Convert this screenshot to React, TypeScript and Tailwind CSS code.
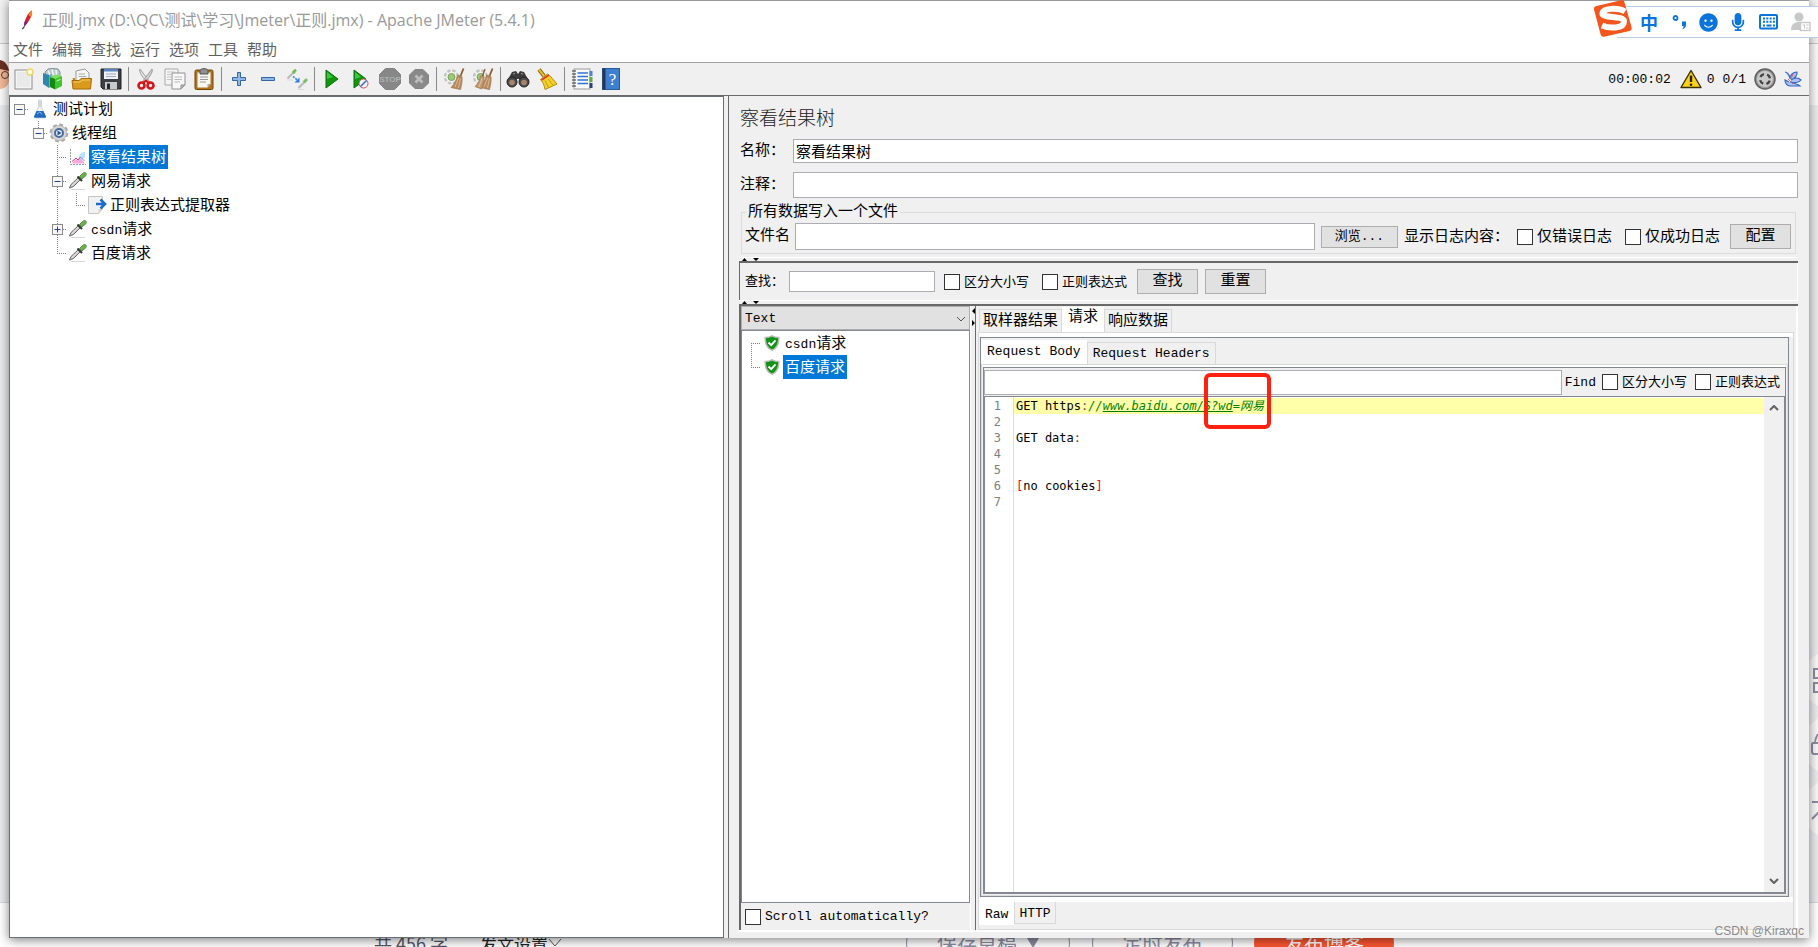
import React, { useState } from 'react';
import { FaSmile, FaMicrophone } from 'react-icons/fa';

type Cell = 'blank' | 'pass' | 'tee' | 'elbow' | 'start' | 'minus' | 'plus' | 'minusRoot' | 'minusLast';

interface Node {
  id: string;
  cells: Cell[];
  icon: React.ReactNode;
  latin?: string;
  label: string;
}

/* ---------- icons ---------- */

const Feather = () => (
  <svg width="12" height="20" viewBox="0 0 12 20">
    <path d="M10.5 0.5C12 3 10 8 7 12L3.5 16.5C2.5 14 4 10 5.5 7C7 4 9 1.5 10.5 0.5Z" fill="#d3222a" />
    <path d="M10.5 0.5C12 3 11 5 10 7L7.5 5C8.5 3 9.5 1.5 10.5 0.5Z" fill="#f08a24" />
    <path d="M4 11L7 12L3.5 16.5C2.8 15 3 13 4 11Z" fill="#7b2482" />
    <path d="M3.5 16.5L1.2 19.2" stroke="#444" strokeWidth="1.2" />
  </svg>
);

const NewIcon = () => (
  <svg width="20" height="22" viewBox="0 0 20 22">
    <rect x="1" y="2" width="17" height="19" fill="#f4f4f4" stroke="#8f8f8f" />
    <rect x="3" y="4" width="13" height="15" fill="#e9e9e9" />
    <circle cx="16" cy="4" r="3" fill="#fffbe0" stroke="#ecd968" strokeWidth="1.5" />
  </svg>
);

const TemplatesIcon = () => (
  <svg width="22" height="22" viewBox="0 0 22 22">
    <path d="M3 4L6 1L11 .5L16 1L18 4V9H4Z" fill="#b9c9cd" stroke="#7f9296" />
    <path d="M6 2.500L8 7M10 1.500L11.500 7M14 2L14.500 7" stroke="#f3f7f8" strokeWidth="1.400" />
    <path d="M1 5L7 7V20L1 16Z" fill="#2f86ad" />
    <path d="M7 7L10 6V18L7 20Z" fill="#56b3d4" />
    <path d="M8 9L13 10.500V21.500L8 19Z" fill="#128a10" />
    <path d="M13 10.500L20 8V18L13 21.500Z" fill="#3fc62a" />
    <path d="M8 9L15 6.500L20 8L13 10.500Z" fill="#7be05c" />
    <path d="M14.500 13L18.500 11.500" stroke="#d8ffcb" />
  </svg>
);

const OpenIcon = () => (
  <svg width="22" height="22" viewBox="0 0 22 22">
    <path d="M5 3L14 1L18 5V13H5Z" fill="#f7f7f7" stroke="#999" />
    <path d="M7.500 6H14M7.500 8.500H15.500" stroke="#aaa" />
    <path d="M1.500 10H4V12H2Z M18 10H20.500V12H18Z" fill="#c98a14" />
    <path d="M1 12.500H8L10 10.500H20.500L19.500 21H2Z" fill="#d99a1e" stroke="#a76b05" />
    <path d="M2.500 14H9L11 12H19" stroke="#f3cb6a" fill="none" />
  </svg>
);

const SaveIcon = () => (
  <svg width="22" height="22" viewBox="0 0 22 22">
    <path d="M1 1H21V21H3L1 19Z" fill="#3d3f44" stroke="#222" />
    <rect x="4" y="1" width="14" height="10" fill="#eef2f7" />
    <rect x="4" y="1" width="14" height="2.500" fill="#5b85c0" />
    <path d="M6 6H16M6 8.500H16" stroke="#a4aab3" />
    <rect x="5" y="14" width="12" height="7" fill="#c7cbd0" />
    <rect x="7" y="15.500" width="3" height="5.500" fill="#26282c" />
  </svg>
);

const CutIcon = () => (
  <svg width="18" height="22" viewBox="0 0 18 22">
    <path d="M3 1C2 3 3 6 10.500 15L12.500 13.500Z" fill="#e6e6e6" stroke="#888" strokeWidth=".8" />
    <path d="M15 1C16 3 15 6 7.500 15L5.500 13.500Z" fill="#d2d2d2" stroke="#888" strokeWidth=".8" />
    <ellipse cx="4.500" cy="17.500" rx="3" ry="3" fill="none" stroke="#d5151c" strokeWidth="2.600" />
    <ellipse cx="13.500" cy="17.500" rx="3" ry="3" fill="none" stroke="#d5151c" strokeWidth="2.600" />
    <path d="M6 15L9 12.500L12 15" fill="none" stroke="#d5151c" strokeWidth="2" />
  </svg>
);

const CopyIcon = () => (
  <svg width="22" height="22" viewBox="0 0 22 22">
    <path d="M1 1H14V17H1Z" fill="#f4f4f4" stroke="#a9a9a9" />
    <path d="M3 4H11M3 6.500H7M3 9H7M3 11.500H7" stroke="#c6c6c6" />
    <path d="M8 5H21V17L17 21H8Z" fill="#f8f8f8" stroke="#909090" />
    <path d="M10.500 9H18M10.500 11.500H18M10.500 14H16" stroke="#b9b9b9" />
    <path d="M21 17H17V21Z" fill="#bbb" stroke="#909090" />
  </svg>
);

const PasteIcon = () => (
  <svg width="20" height="22" viewBox="0 0 20 22">
    <rect x="1" y="2" width="18" height="19.500" rx="1.500" fill="#b5741b" stroke="#6f450c" />
    <path d="M3.500 4.500H16.500V16L13.500 19.500H3.500Z" fill="#f7f7f5" />
    <path d="M6 9H14M6 11.500H14M6 14H12" stroke="#9b9b9b" />
    <path d="M16.500 16H13.500V19.500Z" fill="#aaa" />
    <path d="M6 2.500C7 0 13 0 14 2.500V6H6Z" fill="#8d9193" stroke="#4e5153" />
  </svg>
);

const PlusIcon = () => (
  <svg width="16" height="16" viewBox="0 0 16 16">
    <path d="M6.500 1.500H9.500V6.500H14.500V9.500H9.500V14.500H6.500V9.500H1.500V6.500H6.500Z" fill="#8fb8e6" stroke="#3465a4" />
  </svg>
);

const MinusIcon = () => (
  <svg width="16" height="16" viewBox="0 0 16 16">
    <path d="M1.500 6.500H14.500V9.500H1.500Z" fill="#8fb8e6" stroke="#3465a4" />
  </svg>
);

const ToggleIcon = () => (
  <svg width="22" height="22" viewBox="0 0 22 22">
    <path d="M1.500 10.500L7 5M12.500 20L18 14.500" stroke="#bdbdbd" strokeWidth="2.400" />
    <path d="M6 4L9 1L10.500 2.500L8 6Z" fill="#74b65c" stroke="#8fc47b" />
    <path d="M17 13.500L20 10.500L21.500 12L19 15Z" fill="#74b65c" stroke="#8fc47b" />
    <path d="M1 12H7M12 21.500H18" stroke="#dadada" />
    <path d="M7 8.500L12 12.500" stroke="#2f7be0" strokeWidth="1.600" strokeDasharray="2 1" />
    <path d="M13.500 9.500V14.500H8.500Z" fill="#2f7be0" />
  </svg>
);

const StartIcon = () => (
  <svg width="14" height="20" viewBox="0 0 14 20">
    <path d="M1 1L13 10L1 19Z" fill="#0f960f" stroke="#0b6d0b" />
    <path d="M2 3L8 8L2 10Z" fill="#3fc63f" />
  </svg>
);

const StartNoPauseIcon = () => (
  <svg width="16" height="20" viewBox="0 0 16 20">
    <path d="M1 1L13 10L1 19Z" fill="#0f960f" stroke="#0b6d0b" />
    <path d="M2 3L8 8L2 10Z" fill="#3fc63f" />
    <circle cx="10.500" cy="14.500" r="4.500" fill="#f3f3ff" stroke="#c65353" />
    <path d="M7.500 17.500L13.500 11.500" stroke="#3e6dc4" strokeWidth="1.600" />
  </svg>
);

const StopIcon = () => (
  <svg width="22" height="22" viewBox="0 0 22 22">
    <path d="M6.500 0.500H15.500L21.500 6.500V15.500L15.500 21.500H6.500L0.500 15.500V6.500Z" fill="#878787" stroke="#828282" />
    <text x="11" y="14" textAnchor="middle" fontSize="8" fontWeight="bold" fill="#b0b0b0" fontFamily="Liberation Sans, sans-serif">STOP</text>
  </svg>
);

const ShutdownIcon = () => (
  <svg width="20" height="20" viewBox="0 0 20 20">
    <path d="M6 0.500H14L19.500 6V14L14 19.500H6L0.500 14V6Z" fill="#898989" stroke="#838383" />
    <path d="M6.500 6.500L13.500 13.500M13.500 6.500L6.500 13.500" stroke="#bcbcbc" strokeWidth="2.800" />
  </svg>
);

const GearBroomIcon = ({ double = false }: { double?: boolean }) => (
  <svg width="22" height="22" viewBox="0 0 22 22">
    <circle cx="8.500" cy="9" r="6.500" fill="#f3f3f3" stroke="#c4c4c4" strokeWidth="2.400" strokeDasharray="3.400 1.700" />
    <circle cx="8.500" cy="9" r="3.500" fill="#9acb74" stroke="#7b9f63" />
    <path d="M20.500 .5L17.500 8" stroke="#8b5a34" strokeWidth="1.800" />
    <path d="M14.500 7L19 8.500C19.500 13 18.500 17 17.500 21.500L8 19.500C11.500 16 13.500 12 14.500 7Z" fill="#b98a5f" stroke="#a27a52" strokeWidth=".8" />
    <path d="M15.500 10L12 19M17.500 10.500L15.500 20" stroke="#dcb792" />
    {double && <path d="M13 1L10.500 8" stroke="#8b5a34" strokeWidth="1.400" />}
    {double && <path d="M8.500 8L12 9C12.500 13 11 17 9.500 21L3 18.500C6 16 8 12 8.500 8Z" fill="#c39a72" stroke="#a27a52" strokeWidth=".8" />}
    {double && <path d="M10 10.500L7 19" stroke="#e2c19e" />}
  </svg>
);

const BinocularsIcon = () => (
  <svg width="24" height="18" viewBox="0 0 24 18">
    <path d="M6 2L10 1L12 4L14 1L18 2L23 11H13.500V9H10.500V11H1Z" fill="#3c3c3c" />
    <circle cx="6" cy="12" r="5" fill="#4b4b4b" stroke="#222" />
    <circle cx="18" cy="12" r="5" fill="#4b4b4b" stroke="#222" />
    <circle cx="6" cy="12.500" r="2.800" fill="#a7836b" />
    <circle cx="18" cy="12.500" r="2.800" fill="#a7836b" />
    <path d="M7 4L9 3.500M15 3.500L17 4" stroke="#9a9a9a" />
  </svg>
);

const BroomIcon = () => (
  <svg width="22" height="22" viewBox="0 0 22 22">
    <path d="M3 1.500L8 8" stroke="#8f6a10" strokeWidth="4" />
    <path d="M3 1.500L8 8" stroke="#eec52a" strokeWidth="2" />
    <path d="M4.500 11.500L11.500 6L15 9L21 16L9 21.500C8.500 17 6.500 14 4.500 11.500Z" fill="#f2d02c" stroke="#b68b0b" />
    <path d="M5.500 12L13 7" stroke="#d93a2a" strokeWidth="1.600" />
    <path d="M9 12.500L12.500 19.500M12 11L17 17" stroke="#c79c13" />
  </svg>
);

const FunctionIcon = () => (
  <svg width="22" height="22" viewBox="0 0 22 22">
    <rect x="3" y="1" width="16" height="20" fill="#f8f8f8" stroke="#9b9b9b" />
    <path d="M6.500 5H17M6.500 8.500H17M6.500 12H17M6.500 15.500H17" stroke="#2e75d8" strokeWidth="1.700" />
    <path d="M1 3H5M1 6H5M1 9H5M1 12H5M1 15H5M1 18H5" stroke="#333" strokeWidth="1.200" />
    <rect x="18.500" y="3" width="3" height="5" fill="#4b83d4" />
    <rect x="18.500" y="9" width="3" height="5" fill="#62a84a" />
    <rect x="18.500" y="15" width="3" height="5" fill="#29437a" />
  </svg>
);

const HelpIcon = () => (
  <svg width="18" height="22" viewBox="0 0 18 22">
    <rect x=".5" y=".5" width="17" height="21" fill="#3d7fd0" stroke="#2a5b9a" />
    <rect x=".5" y=".5" width="3" height="21" fill="#27374f" />
    <text x="10.500" y="17" textAnchor="middle" fontSize="17" fill="#fff" fontFamily="Liberation Serif, serif">?</text>
  </svg>
);

const WarningIcon = () => (
  <svg width="22" height="20" viewBox="0 0 22 20">
    <path d="M11 1.500L21 18.500H1Z" fill="#fcd116" stroke="#3a3000" strokeWidth="1.400" strokeLinejoin="round" />
    <path d="M11 6.500V13" stroke="#222" strokeWidth="2.400" />
    <circle cx="11" cy="15.800" r="1.300" fill="#222" />
  </svg>
);

const TargetIcon = () => (
  <svg width="22" height="22" viewBox="0 0 22 22">
    <circle cx="11" cy="11" r="10" fill="#9b9b9b" stroke="#5f5f5f" strokeWidth="1.500" />
    <circle cx="11" cy="11" r="8" fill="#c9c9c9" />
    <circle cx="11" cy="11" r="5" fill="none" stroke="#444" strokeWidth="2.400" strokeDasharray="4.600 3.254" strokeDashoffset="-1.600" />
  </svg>
);

const WingIcon = () => (
  <svg width="18" height="16" viewBox="0 0 18 16">
    <path d="M1 1C4 1 6 5 6 8M6 8C6 4 9 1 13 1C14 4 10 8 7 9M7 9C10 7 14 6 17 9C15 12 10 12 7 11M6 11C9 12 14 13 16 15H6C3 15 1 12 1 9L5 11" fill="#a9c4f0" stroke="#3a66c8" strokeWidth="1.200" />
    <path d="M4 8L9 13M9 3L7 8" stroke="#d4605c" />
  </svg>
);

const FlaskIcon = () => (
  <svg width="16" height="20" viewBox="0 0 16 20">
    <path d="M6.500 1H9.500V8L13.500 17C14 18.500 13.500 19 12.500 19H3.500C2.500 19 2 18.500 2.500 17L6.500 8Z" fill="#eef3f8" stroke="#cfd4d9" />
    <path d="M8 2V8" stroke="#b3bcc5" />
    <path d="M4.700 12H11.300L14 17.500C14 18.500 13.500 18.700 13 18.700H3C2.500 18.700 2 18.500 2 17.500Z" fill="#2168c0" />
    <path d="M5 15L8 12.800L10 15.500" stroke="#8fc2f4" fill="none" />
  </svg>
);

const GearIcon = () => (
  <svg width="20" height="20" viewBox="0 0 20 20">
    <circle cx="10" cy="10" r="8" fill="#dadada" stroke="#a9a9a9" strokeWidth="2.800" strokeDasharray="3.800 2.480" />
    <circle cx="10" cy="10" r="7.500" fill="#d6d6d6" stroke="#b4b4b4" strokeWidth=".8" />
    <circle cx="10" cy="10" r="4" fill="#e8f0fa" stroke="#4a6c9f" strokeWidth="2" />
    <path d="M8.500 7.500L12.500 10L8.500 12.500Z" fill="#2b569b" />
  </svg>
);

const ChartIcon = () => (
  <svg width="18" height="18" viewBox="0 0 18 18">
    <path d="M1.500 1V16.500H17" stroke="#999" fill="none" strokeDasharray="2 1" />
    <path d="M3 15.500L6 11.500L9 12L12 10.500L16 15.500Z" fill="#f5a9dc" />
    <path d="M10 10C10 6 12 4 16 4V9L13 12Z" fill="#bfe0fb" />
    <path d="M3 13.500L7 10L9 12L11.500 9" stroke="#d8377a" fill="none" />
    <path d="M11.500 9L15.500 13" stroke="#7d8fd8" />
  </svg>
);

const DropperIcon = () => (
  <svg width="20" height="20" viewBox="0 0 20 20">
    <path d="M1.500 17L3 13.500L10.500 6.500L12.500 8.500L5.500 15.500Z" fill="#c4c4c4" stroke="#6a6a6a" />
    <path d="M3.500 15L10.500 8" stroke="#f2f2f2" />
    <path d="M9.500 5.500L14 10" stroke="#333" strokeWidth="2" />
    <path d="M11.500 5.500L14.500 2.500C16.500 .5 19.500 2 18 4.500L14 8Z" fill="#6fae4f" stroke="#5a9440" />
    <path d="M3 18.500H17" stroke="#d6d6d6" />
  </svg>
);

const ExtractorIcon = () => (
  <svg width="20" height="20" viewBox="0 0 20 20">
    <path d="M1.500 1.500H15.500V14L11.500 18.500H1.500Z" fill="#f1f1f1" stroke="#c5c5c5" />
    <path d="M15.500 14H11.500V18.500Z" fill="#d5d5d5" />
    <path d="M9 9H17M13.500 4.500L18 9L13.500 13.500" fill="none" stroke="#1c6cc8" strokeWidth="2.600" />
  </svg>
);

const ShieldIcon = () => (
  <svg width="16" height="16" viewBox="0 0 16 16">
    <path d="M8 .8C10 2 12.500 2.500 14.800 2.500C15 9 12.500 13.500 8 15.300C3.500 13.500 1 9 1.200 2.500C3.500 2.500 6 2 8 .8Z" fill="#0f9413" stroke="#b9b9b9" strokeWidth="1.500" />
    <path d="M4.500 7.500L7.200 10.200L11.500 5.300" fill="none" stroke="#fff" strokeWidth="1.900" />
  </svg>
);

const SogouLogo = () => (
  <svg width="40" height="38" viewBox="0 0 40 38">
    <path d="M1 10.500C.5 8.500 1.500 7.500 3.500 7L28 1.200C30 .8 31 1.500 31.500 3.500L38.500 28C39 30 38.500 31.500 36.500 32L12 37.500C9.500 38 8 37.500 7.500 35Z" fill="#f2561d" />
    <path d="M32 12.500C26 9 10.500 8.500 9.500 14C8.500 20 31 16 31 22.500C31 30 16 29.500 9 26.500" fill="none" stroke="#fff" strokeWidth="6" />
  </svg>
);

const KeyboardIcon = () => (
  <svg width="20" height="16" viewBox="0 0 20 16">
    <rect x="1" y="1" width="17" height="13.500" rx="1" fill="#fff" stroke="currentColor" strokeWidth="2" />
    <path d="M4 4.500H16M4 7.800H16" stroke="currentColor" strokeWidth="2" strokeDasharray="2 1.300" />
    <path d="M4 11.500H6M7.500 11.500H12.500M14 11.500H16" stroke="currentColor" strokeWidth="2" />
  </svg>
);

const UserIcon = () => (
  <svg width="20" height="20" viewBox="0 0 20 20">
    <circle cx="8" cy="5" r="4.500" fill="#c8c8c8" />
    <path d="M0 18C0 12 4 10 8 10S12 11 12 12V18Z" fill="#c8c8c8" />
    <rect x="9.500" y="10.500" width="9.500" height="8" fill="#fff" stroke="#c8c8c8" strokeWidth="1.400" />
    <path d="M11.500 13H13.500V16.500M15 13H17.500M15 16H17.500" fill="none" stroke="#c8c8c8" strokeWidth="1.200" />
  </svg>
);

/* ---------- small controls ---------- */

const Check = ({ id, label, small = false }: { id: string; label: string; small?: boolean }) => (
  <label htmlFor={id} className={`flex shrink-0 items-center gap-1 whitespace-nowrap ${small ? 'text-[13px]' : 'text-[15px]'}`}>
    <input id={id} type="checkbox" className="size-4 shrink-0 appearance-none border border-[#333] bg-white checked:bg-[#0078d7]" />
    <span className="pt-px">{label}</span>
  </label>
);

const PushButton = ({ children }: { children: React.ReactNode }) => (
  <button className="h-[25px] w-[61px] shrink-0 border border-[#adadad] bg-[#e1e1e1] text-[15px] leading-none">{children}</button>
);

const Divider = () => (
  <div className="h-[6px] shrink-0 border-t border-b-2 border-t-white border-b-[#696969]">
    <svg width="24" height="3" viewBox="0 0 24 3">
      <path d="M3 3L5.500 0L8 3Z M14 0H20L17 3Z" fill="#000" />
    </svg>
  </div>
);

const TreeCell = ({ kind }: { kind: Cell }) => {
  const top = ['pass', 'tee', 'elbow', 'minus', 'plus', 'minusLast'].includes(kind);
  const bottom = ['pass', 'tee', 'start', 'minus', 'plus'].includes(kind);
  const box = ['minus', 'plus', 'minusRoot', 'minusLast'].includes(kind);
  return (
    <svg width="19" height="24" viewBox="0 0 19 24" className="shrink-0">
      <g stroke="#808080" strokeDasharray="1 1">
        {top && <path d="M9.500 0V12" />}
        {bottom && <path d="M9.500 12V24" />}
        {kind !== 'blank' && kind !== 'pass' && <path d="M9 12.500H19" />}
      </g>
      {box && <rect x="4.500" y="7.500" width="10" height="10" fill="#f6f6f6" stroke="#8a8a8a" />}
      {box && <path d="M6.500 12.500H12.500" stroke="#26418c" />}
      {kind === 'plus' && <path d="M9.500 9.500V15.500" stroke="#26418c" />}
    </svg>
  );
};

const Tree = ({ nodes, initial, label }: { nodes: Node[]; initial: string; label: string }) => {
  const [selected, setSelected] = useState(initial);
  return (
    <div role="tree" aria-label={label}>
      {nodes.map((n) => (
        <div key={n.id} role="treeitem" aria-selected={selected === n.id} className="flex h-6 items-center">
          {n.cells.map((c, i) => (
            <TreeCell key={i} kind={c} />
          ))}
          <span className="flex w-[22px] shrink-0 justify-center">{n.icon}</span>
          <button
            onClick={() => setSelected(n.id)}
            className={`flex h-6 items-center px-[2px] pt-[2px] text-[15px] leading-none whitespace-nowrap ${selected === n.id ? 'bg-[#0078d7] text-white' : ''}`}
          >
            {n.latin && <span className="text-[13px]">{n.latin}</span>}
            {n.label}
          </button>
        </div>
      ))}
    </div>
  );
};

/* ---------- data ---------- */

const menus = ['文件', '编辑', '查找', '运行', '选项', '工具', '帮助'];

const toolGroups = [
  [
    { name: '新建', icon: <NewIcon /> },
    { name: '模板', icon: <TemplatesIcon /> },
    { name: '打开', icon: <OpenIcon /> },
    { name: '保存', icon: <SaveIcon /> },
  ],
  [
    { name: '剪切', icon: <CutIcon /> },
    { name: '复制', icon: <CopyIcon /> },
    { name: '粘贴', icon: <PasteIcon /> },
  ],
  [
    { name: '展开', icon: <PlusIcon /> },
    { name: '折叠', icon: <MinusIcon /> },
    { name: '切换', icon: <ToggleIcon /> },
  ],
  [
    { name: '启动', icon: <StartIcon /> },
    { name: '不停顿开始', icon: <StartNoPauseIcon /> },
    { name: '停止', icon: <StopIcon /> },
    { name: '关闭', icon: <ShutdownIcon /> },
  ],
  [
    { name: '清除', icon: <GearBroomIcon /> },
    { name: '清除全部', icon: <GearBroomIcon double /> },
  ],
  [
    { name: '搜索', icon: <BinocularsIcon /> },
    { name: '重置搜索', icon: <BroomIcon /> },
  ],
  [
    { name: '函数助手', icon: <FunctionIcon /> },
    { name: '帮助', icon: <HelpIcon /> },
  ],
];

const planNodes: Node[] = [
  { id: 'plan', cells: ['minusRoot'], icon: <FlaskIcon />, label: '测试计划' },
  { id: 'group', cells: ['blank', 'minusLast'], icon: <GearIcon />, label: '线程组' },
  { id: 'view', cells: ['blank', 'blank', 'tee'], icon: <ChartIcon />, label: '察看结果树' },
  { id: 'wy', cells: ['blank', 'blank', 'minus'], icon: <DropperIcon />, label: '网易请求' },
  { id: 'regex', cells: ['blank', 'blank', 'pass', 'elbow'], icon: <ExtractorIcon />, label: '正则表达式提取器' },
  { id: 'csdn', cells: ['blank', 'blank', 'plus'], icon: <DropperIcon />, latin: 'csdn', label: '请求' },
  { id: 'baidu', cells: ['blank', 'blank', 'elbow'], icon: <DropperIcon />, label: '百度请求' },
];

const resultNodes: Node[] = [
  { id: 'r-csdn', cells: ['start'], icon: <ShieldIcon />, latin: 'csdn', label: '请求' },
  { id: 'r-baidu', cells: ['elbow'], icon: <ShieldIcon />, label: '百度请求' },
];

const codeLines: React.ReactNode[] = [
  <>
    GET https<span className="text-[#804040]">:</span>
    <span className="text-[#008000] italic">
      //<a href="#url" className="underline">www.baidu.com/S?wd</a>=网易
    </span>
  </>,
  '',
  <>GET data<span className="text-[#804040]">:</span></>,
  '',
  '',
  <><span className="text-[#f00]">[</span>no cookies<span className="text-[#f00]">]</span></>,
  '',
];

/* ---------- page behind the window ---------- */

const Backdrop = () => (
  <div className="absolute inset-0 flex flex-col overflow-hidden bg-[#e9ebee] font-['Noto_Sans_CJK_SC',sans-serif]">
    <div className="h-11 border-b border-[#c8c8c8] bg-[#f2f2f2]" />
    <div className="h-[61px] bg-[#fafafa]" />
    <div className="flex-1" />
    <div className="h-[45px] border-t border-[#d8d8d8] bg-white" />
    <svg width="9" height="32" viewBox="0 0 9 32" className="absolute top-[58px] left-0">
      <path d="M0 3C5 4 9 8 9 14V24C7 29 3 31 0 31Z" fill="#f3b99a" />
      <path d="M0 2C5 3 8 7 9 13L0 11Z" fill="#6a3024" />
      <circle cx="5" cy="17" r="3.500" fill="none" stroke="#5a3a30" />
    </svg>
    <svg width="9" height="190" viewBox="0 0 9 190" className="absolute top-[650px] right-0">
      <g fill="#f8f8f9">
        <circle cx="22" cy="30" r="29" />
        <circle cx="22" cy="95" r="29" />
        <circle cx="22" cy="159" r="29" />
      </g>
      <g fill="none" stroke="#8c8ca3" strokeWidth="2">
        <path d="M10 19H5V28H10M10 33H5V42H10" />
        <path d="M10 93H4C3 93 3 94 3 95V101C3 103 4 104 5 104H10M6 93C6 90 7 87 9 84" />
        <path d="M3 152H10M3 169L10 162" />
      </g>
    </svg>
    <div className="absolute inset-x-0 -bottom-[18px] flex h-11 items-center pl-[374px] text-[20px] whitespace-nowrap text-[#8c8ca3]">
      <span className="w-[106px] text-[18px] text-[#555666]">共 456 字</span>
      <span className="flex w-[426px] items-center text-[17px] text-[#222226]">
        发文设置
        <svg width="14" height="10" viewBox="0 0 14 10"><path d="M1 1L7 8L13 1" fill="none" stroke="#555" /></svg>
      </span>
      <button className="flex h-11 w-[164px] items-center justify-center gap-[10px] rounded-full border border-[#8c8ca3]">
        保存草稿
        <svg width="12" height="10" viewBox="0 0 12 10"><path d="M0 0H12L6 10Z" fill="currentColor" /></svg>
      </button>
      <button className="ml-[22px] h-11 w-[141px] rounded-full border border-[#8c8ca3]">定时发布</button>
      <button className="ml-[21px] h-11 w-[140px] rounded-full bg-[#fc5531] text-white">发布博客</button>
    </div>
  </div>
);

const ImeBar = () => (
  <div className="absolute top-0 right-0 z-20 flex items-center text-[#0a74dc]">
    <div className="absolute top-[6px] right-0 left-6 h-8 border-y border-[#b9cfe8] bg-white" />
    <div className="relative flex h-[44px] items-center pr-[7px]">
      <div className="mr-[7px] -mt-2"><SogouLogo /></div>
      <span className="w-[32px] font-['Noto_Sans_CJK_SC',sans-serif] text-[18px] leading-none font-bold">中</span>
      <svg width="27" height="20" viewBox="0 0 27 20">
        <circle cx="3.500" cy="6" r="2" fill="none" stroke="currentColor" strokeWidth="1.800" />
        <path d="M10 9.500H14V13C14 15 12.500 17 10 17.500C11.500 16 11.500 15 11.500 14H10Z" fill="currentColor" />
      </svg>
      <FaSmile size={19} className="mr-[11px]" />
      <FaMicrophone size={18} className="mr-3" />
      <span className="mr-3"><KeyboardIcon /></span>
      <UserIcon />
    </div>
  </div>
);

/* ---------- request editor ---------- */

const Editor = () => (
  <div className="flex min-h-0 flex-1 border-2 border-t border-[#828790] bg-white font-['DejaVu_Sans_Mono','Noto_Sans_CJK_SC',monospace] text-[12px] leading-4">
    <div className="w-[29px] shrink-0 border-r border-[#ddd] pt-px text-[#808080]">
      {codeLines.map((_, i) => (
        <div key={i} className="h-4 pr-3 text-right">{i + 1}</div>
      ))}
    </div>
    <div className="min-w-0 flex-1 pt-px">
      {codeLines.map((line, i) => (
        <div key={i} className={`relative h-4 pl-[2px] whitespace-pre ${i === 0 ? 'bg-[#ffffaa]' : ''}`}>
          {line}
          {i === 0 && <div className="absolute -top-[25px] left-[190px] z-10 h-[56px] w-[67px] rounded-md border-4 border-[#ff2010]" />}
        </div>
      ))}
    </div>
    <div className="flex w-5 shrink-0 flex-col items-center justify-between bg-[#f0f0f0] py-2 text-[#606060]">
      <svg width="10" height="6" viewBox="0 0 10 6"><path d="M1 5L5 1L9 5" fill="none" stroke="currentColor" strokeWidth="2" /></svg>
      <svg width="10" height="6" viewBox="0 0 10 6"><path d="M1 1L5 5L9 1" fill="none" stroke="currentColor" strokeWidth="2" /></svg>
    </div>
  </div>
);

const RequestPane = () => (
  <div className="flex min-w-0 flex-1 flex-col border-r-2 border-l border-r-white border-l-[#696969] pt-px pr-[2px] pl-[2px]">
    <div className="flex h-[25px] shrink-0 items-end pl-px text-[15px] leading-none">
      <button className="h-[23px] border border-b-0 border-[#d9d9d9] px-[3px] pt-px">取样器结果</button>
      <button className="h-[25px] bg-white px-[6px] pb-1">请求</button>
      <button className="h-[23px] border border-b-0 border-[#d9d9d9] px-[3px] pt-px">响应数据</button>
    </div>
    <div className="flex min-h-0 flex-1 flex-col border border-[#d9d9d9]">
      <div className="h-1 shrink-0 bg-white" />
      <div className="mr-1 ml-px flex min-h-0 flex-1 flex-col border border-[#828790] pt-[2px]">
        <div className="flex h-6 shrink-0 items-end text-[13px] leading-none">
          <button className="h-6 bg-white px-[6px] pb-[2px]">Request Body</button>
          <button className="h-[22px] border border-b-0 border-[#d9d9d9] px-[5px]">Request Headers</button>
        </div>
        <div className="flex min-h-0 flex-1 flex-col border border-[#d9d9d9]">
          <div className="h-[2px] shrink-0 bg-white" />
          <div className="mr-px mb-px ml-px flex min-h-0 flex-1 flex-col">
            <div className="flex h-[29px] shrink-0 items-center border border-b-0 border-[#828790] pr-[5px] text-[13px]">
              <input id="find" className="h-[25px] min-w-0 flex-1 border border-[#abadb3] bg-white px-1" />
              <label htmlFor="find" className="mr-[6px] ml-[3px]">Find</label>
              <Check id="find-case" label="区分大小写" small />
              <span className="w-2" />
              <Check id="find-regex" label="正则表达式" small />
            </div>
            <Editor />
          </div>
        </div>
      </div>
      <div className="flex h-8 shrink-0 items-start border-t-[5px] border-white text-[13px] leading-none">
        <button className="-mt-[5px] h-7 bg-white px-[6px] pt-[6px]">Raw</button>
        <button className="h-[22px] border border-t-0 border-[#d9d9d9] px-1 pt-px">HTTP</button>
      </div>
    </div>
  </div>
);

/* ---------- window ---------- */

const App: React.FC = () => {
  return (
    <div className="relative flex h-screen flex-col overflow-hidden font-['Liberation_Mono','Noto_Sans_CJK_SC',monospace] text-[15px] leading-none text-black">
      <Backdrop />
      <div className="relative mx-[9px] mb-[9px] flex min-h-0 flex-1 flex-col border-t border-[#999] bg-[#f0f0f0] shadow-[0_2px_10px_rgba(0,0,0,0.5)]">
        <header className="shrink-0 bg-white">
          <div className="flex h-[37px] items-center pl-3 font-['Open_Sans','Noto_Sans_CJK_SC',sans-serif] text-[#999]">
            <Feather />
            <h1 className="ml-[9px] text-[16px]">正则.jmx (D:\QC\测试\学习\Jmeter\正则.jmx) - Apache JMeter (5.4.1)</h1>
          </div>
          <nav className="flex h-[25px] items-center gap-[9px] border-b border-[#a0a0a0] pt-[3px] pl-1 text-[#5f5f5f]">
            {menus.map((m) => (
              <button key={m} className="leading-none">{m}</button>
            ))}
          </nav>
        </header>

        <div className="flex h-[33px] shrink-0 items-center border-b border-[#696969]">
          {toolGroups.map((group, i) => (
            <div key={i} className={`flex items-center ${i > 0 ? 'ml-[3px] border-l border-[#8a8a8a] pl-[2px]' : ''}`}>
              {group.map((tool) => (
                <button key={tool.name} aria-label={tool.name} className="flex h-6 w-[29px] items-center justify-center">
                  {tool.icon}
                </button>
              ))}
            </div>
          ))}
          <div className="ml-auto flex items-center pr-[7px] text-[13px]">
            <span>00:00:02</span>
            <span className="mr-[5px] ml-[9px]"><WarningIcon /></span>
            <span>0</span>
            <span className="mr-2 ml-2">0/1</span>
            <TargetIcon />
            <span className="ml-2"><WingIcon /></span>
          </div>
        </div>

        <div className="flex min-h-0 flex-1 gap-1">
          <aside className="w-[715px] shrink-0 border border-[#696d75] bg-white">
            <Tree nodes={planNodes} initial="view" label="测试计划" />
          </aside>

          <main className="flex min-w-0 flex-1 flex-col border-l border-[#696969] pr-[11px] pb-[6px] pl-[10px]">
            <h2 className="mt-3 flex h-6 shrink-0 items-center pl-px text-[19px] font-light text-[#222]">察看结果树</h2>
            <div className="mt-[7px] flex h-6 shrink-0 items-center pl-px">
              <label htmlFor="name" className="w-[53px]">名称：</label>
              <input id="name" defaultValue="察看结果树" className="h-6 min-w-0 flex-1 border border-[#abadb3] bg-white px-[2px]" />
            </div>
            <div className="mt-[9px] flex h-[26px] shrink-0 items-center pl-px">
              <label htmlFor="comment" className="w-[53px]">注释：</label>
              <input id="comment" className="h-[26px] min-w-0 flex-1 border border-[#abadb3] bg-white px-[2px]" />
            </div>
            <fieldset className="mx-[2px] mt-[6px] shrink-0 border border-[#dcdcdc] pt-[3px] pr-1 pb-[3px] pl-[3px]">
              <legend className="ml-px h-4 px-[2px] pt-px leading-4">所有数据写入一个文件</legend>
              <div className="flex h-[27px] items-center">
                <label htmlFor="file" className="w-[50px] shrink-0">文件名</label>
                <input id="file" className="h-[27px] min-w-0 flex-1 border border-[#abadb3] bg-white px-[2px]" />
                <button className="ml-[6px] h-[22px] w-[77px] shrink-0 border border-[#adadad] bg-[#e1e1e1] text-[13px]">浏览...</button>
                <span className="mr-2 ml-[6px] shrink-0 pt-px">显示日志内容：</span>
                <Check id="only-error" label="仅错误日志" />
                <span className="w-[13px] shrink-0" />
                <Check id="only-success" label="仅成功日志" />
                <span className="w-[10px] shrink-0" />
                <PushButton>配置</PushButton>
              </div>
            </fieldset>

            <div className="h-[3px] shrink-0" />
            <Divider />
            <div className="flex h-[37px] shrink-0 items-center border-r border-l border-r-white border-l-[#696969] pl-[5px]">
              <label htmlFor="search" className="w-[44px] text-[13px]">查找：</label>
              <input id="search" className="mr-[9px] h-[21px] w-[146px] border border-[#abadb3] bg-white px-1 text-[13px]" />
              <Check id="case" label="区分大小写" small />
              <span className="w-[13px]" />
              <Check id="regex" label="正则表达式" small />
              <span className="w-[10px]" />
              <PushButton>查找</PushButton>
              <span className="w-[7px]" />
              <PushButton>重置</PushButton>
            </div>
            <Divider />

            <div className="flex min-h-0 flex-1 border-b-2 border-white">
              <section className="flex w-[231px] shrink-0 flex-col border-l-2 border-[#696969]">
                <div className="relative h-6 shrink-0">
                  <select aria-label="渲染方式" className="h-6 w-full appearance-none border border-[#adadad] bg-[#e1e1e1] px-[3px] text-[13px]">
                    <option>Text</option>
                  </select>
                  <svg width="10" height="6" viewBox="0 0 10 6" className="pointer-events-none absolute top-[10px] right-1">
                    <path d="M1 1L5 5L9 1" fill="none" stroke="#555" />
                  </svg>
                </div>
                <div className="min-h-0 flex-1 border border-[#828790] bg-white">
                  <Tree nodes={resultNodes} initial="r-baidu" label="结果" />
                </div>
                <label htmlFor="auto" className="flex h-[27px] shrink-0 items-center gap-1 pl-1 text-[13px]">
                  <input id="auto" type="checkbox" className="size-4 appearance-none border border-[#333] bg-white" />
                  Scroll automatically?
                </label>
              </section>
              <div className="w-[5px] shrink-0 border-l border-white pl-px">
                <svg width="3" height="20" viewBox="0 0 3 20">
                  <path d="M3 2V8L0 5Z M0 14V20L3 17Z" fill="#000" />
                </svg>
              </div>
              <RequestPane />
            </div>
          </main>
        </div>
        <span className="absolute right-[5px] -bottom-px font-['Liberation_Sans',sans-serif] text-[12px] leading-4 text-[#8a8a8a]">CSDN @Kiraxqc</span>
      </div>
      <ImeBar />
    </div>
  );
};

export default App;
